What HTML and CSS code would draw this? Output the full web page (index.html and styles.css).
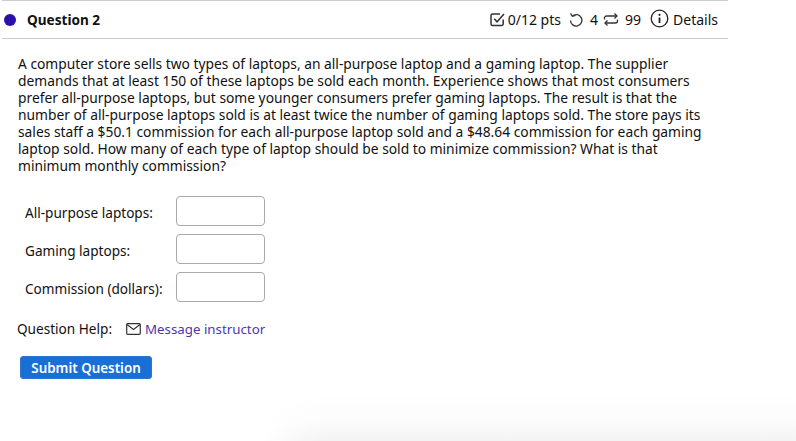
FILE: index.html
```html
<!DOCTYPE html>
<html lang="en">
<head>
    <meta charset="UTF-8">
    <meta name="viewport" content="width=device-width, initial-scale=1.0">
    <title>Question 2</title>
    <link rel="stylesheet" href="styles.css">
</head>
<body>
    <div class="question">
        <div class="header">
            <div class="title">
                <span class="dot"></span>
                <span class="name">Question 2</span>
            </div>
            <div class="meta">
                <svg class="icon check" width="15" height="15" viewBox="0 0 15 15" fill="none" stroke="#333" stroke-width="1.5">
                    <path d="M13.200 7.500V12a1.500 1.500 0 0 1-1.500 1.500H2.500A1.500 1.500 0 0 1 1 12V3.500A1.500 1.500 0 0 1 2.500 2h7.500"/>
                    <path d="M4.300 6.800l2.700 3 7-7.800"/>
                </svg>
                <span class="pts">0/12 pts</span>
                <svg class="icon" width="15" height="15" viewBox="0 0 15 15" fill="none" stroke="#333" stroke-width="1.300">
                    <path d="M3.300 4.200a5.700 5.700 0 1 1-1.800 4.200"/>
                    <path d="M1.500 1.300l1.800 3 3.200-1"/>
                </svg>
                <span class="tries">4</span>
                <svg class="icon" width="16" height="15" viewBox="0 0 16 15" fill="none" stroke="#333" stroke-width="1.300">
                    <path d="M1.500 7.500V6a2 2 0 0 1 2-2H14"/>
                    <path d="M11.500 1.500L14 4l-2.500 2.500"/>
                    <path d="M14.500 7.500V9a2 2 0 0 1-2 2H2"/>
                    <path d="M4.500 8.500L2 11l2.500 2.500"/>
                </svg>
                <span class="tries">99</span>
                <svg class="icon info" width="19" height="19" viewBox="0 0 19 19" fill="none">
                    <circle cx="9.500" cy="9.500" r="8.300" stroke="#222" stroke-width="1.300"/>
                    <circle cx="9.500" cy="5.800" r="1.100" fill="#222"/>
                    <path d="M9.500 8.500v5.500" stroke="#222" stroke-width="1.800"/>
                </svg>
                <span>Details</span>
            </div>
        </div>

        <p class="text">A computer store sells two types of laptops, an all-purpose laptop and a gaming laptop. The supplier demands that at least 150 of these laptops be sold each month. Experience shows that most consumers prefer all-purpose laptops, but some younger consumers prefer gaming laptops. The result is that the number of all-purpose laptops sold is at least twice the number of gaming laptops sold. The store pays its sales staff a $50.1 commission for each all-purpose laptop sold and a $48.64 commission for each gaming laptop sold. How many of each type of laptop should be sold to minimize commission? What is that minimum monthly commission?</p>

        <div class="answers">
            <label class="answer-label" for="a1">All-purpose laptops:</label>
            <input class="answer" id="a1" type="text">
            <label class="answer-label" for="a2">Gaming laptops:</label>
            <input class="answer" id="a2" type="text">
            <label class="answer-label" for="a3">Commission (dollars):</label>
            <input class="answer" id="a3" type="text">
        </div>

        <div class="help">
            <span>Question Help:</span>
            <svg class="mail" width="15" height="12" viewBox="0 0 15 12" fill="none" stroke="#333" stroke-width="1.200">
                <rect x="0.700" y="0.700" width="13.600" height="10.600" rx="1"/>
                <path d="M1 1.500l6.500 5 6.500-5"/>
            </svg>
            <a href="#" class="help-link">Message instructor</a>
        </div>

        <button class="submit">Submit Question</button>
    </div>
    <div class="shade"></div>
</body>
</html>
```

FILE: styles.css
```css
html, body {
    height: 100%;
}
body {
    margin: 0;
    background: #fff;
    color: #111;
    font-family: "Noto Sans", sans-serif;
    font-size: 13.6px;
}
.question {
    width: 726px;
    margin-left: 2px;
}
.header {
    display: flex;
    justify-content: space-between;
    align-items: center;
    height: 37px;
    border-top: 1px solid #ccc;
    border-bottom: 1px solid #ccc;
    padding-right: 10px;
}
.title {
    display: flex;
    align-items: center;
    padding-left: 2px;
}
.dot {
    width: 12px;
    height: 12px;
    border-radius: 50%;
    background: #2a0fa8;
    margin-right: 11px;
}
.name {
    font-weight: bold;
}
.meta {
    display: flex;
    align-items: center;
    font-size: 14px;
}
.icon {
    margin-right: 3px;
}
.pts {
    margin-right: 8px;
}
.tries {
    margin-left: 3px;
    margin-right: 5px;
}
.info {
    margin-left: 4px;
    margin-right: 4px;
    margin-bottom: 3px;
}
.text {
    margin: 16px 0 0 16px;
    width: 690px;
    font-size: 13.8px;
    line-height: 17.05px;
}
.answers {
    display: grid;
    grid-template-columns: 138px 89px;
    column-gap: 13px;
    row-gap: 8px;
    align-items: center;
    margin: 22px 0 0 23px;
}
.answer-label {
    padding-top: 2px;
}
.answer {
    height: 30px;
    box-sizing: border-box;
    border: 1px solid #aaa;
    border-radius: 4px;
    background: #fff;
}
.help {
    display: flex;
    align-items: center;
    margin: 17px 0 0 15px;
}
.mail {
    margin-left: 14px;
    margin-right: 4px;
}
.help-link {
    color: #4b37ad;
    font-size: 13.3px;
    text-decoration: none;
}
.submit {
    display: block;
    margin: 18px 0 0 18px;
    width: 132px;
    height: 23px;
    padding: 0;
    border: 1px solid #2a76cf;
    border-radius: 3px;
    background: #1a6fd6;
    color: #fff;
    font-family: inherit;
    font-size: 13.4px;
    font-weight: 600;
}
.shade {
    position: absolute;
    left: 262px;
    right: 0;
    bottom: 0;
    height: 46px;
    background: linear-gradient(to bottom, rgba(243, 243, 243, 0), rgba(250, 250, 250, 0.7) 60%, #f3f3f3);
    -webkit-mask-image: linear-gradient(to right, transparent, #000 60px);
    mask-image: linear-gradient(to right, transparent, #000 60px);
}
```
